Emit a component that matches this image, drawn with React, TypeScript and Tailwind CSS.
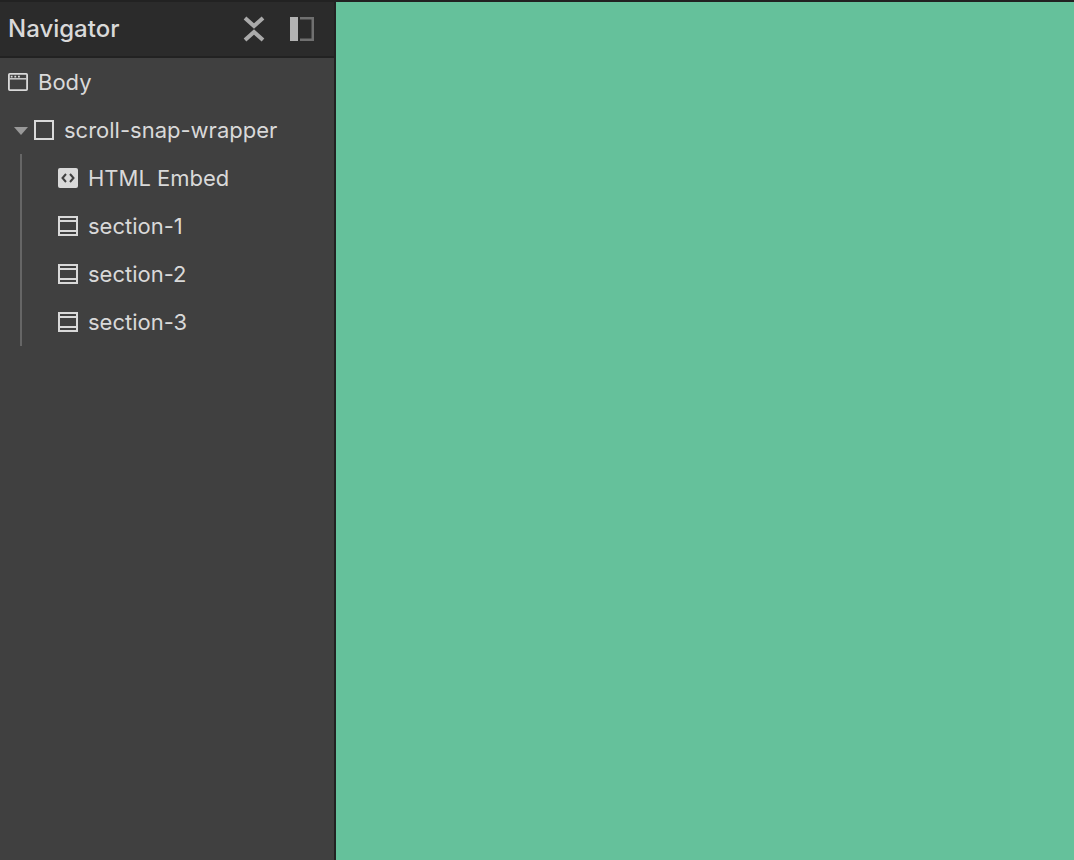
const BodyIcon = () => (
  <svg width="22" height="20" viewBox="0 0 22 20" fill="none">
    <rect x="1" y="1" width="20" height="18" rx="1" stroke="#d9d9d9" strokeWidth="2" />
    <path d="M2 6.5h18" stroke="#d9d9d9" strokeWidth="1.5" />
    <path d="M3 3h2v2H3zM7 3h2v2H7zM11 3h2v2h-2z" fill="#d9d9d9" />
  </svg>
)

const BoxIcon = () => (
  <svg width="20" height="20" viewBox="0 0 20 20" fill="none">
    <rect x="1" y="1" width="18" height="18" stroke="#d9d9d9" strokeWidth="2" />
  </svg>
)

const EmbedIcon = () => (
  <svg width="20" height="20" viewBox="0 0 20 20" fill="none">
    <rect width="20" height="20" rx="2" fill="#d9d9d9" />
    <path d="M8 6l-3.5 4L8 14M12 6l3.5 4-3.5 4" stroke="#404040" strokeWidth="2" />
  </svg>
)

const SectionIcon = () => (
  <svg width="20" height="20" viewBox="0 0 20 20" fill="none">
    <rect x="1" y="1" width="18" height="18" stroke="#d9d9d9" strokeWidth="2" />
    <path d="M1 5h18M1 15h18" stroke="#d9d9d9" strokeWidth="2" />
  </svg>
)

const Row = ({ indent, icon, label, caret }: { indent: string; icon: React.ReactNode; label: string; caret?: boolean }) => (
  <div className={`relative flex h-12 items-center ${indent}`}>
    {caret && (
      <span className="absolute left-[14px] top-[21px] h-0 w-0 border-x-[7px] border-t-[8px] border-x-transparent border-t-[#999999]" />
    )}
    <span className="flex w-5 shrink-0 justify-center">{icon}</span>
    <span className="ml-[10px] text-[22px] leading-none text-[#d9d9d9]">{label}</span>
  </div>
)

export default function App() {
  return (
    <div className="flex h-[860px] w-[1074px] overflow-hidden border-t-2 border-[#222222] bg-[#65c19b] font-['Inter',sans-serif]">
      <aside className="flex w-[336px] shrink-0 flex-col border-r-2 border-[#222222] bg-[#404040]">
        <header className="flex h-[56px] shrink-0 items-center justify-between border-b-2 border-[#222222] bg-[#2b2b2b] pl-2 pr-5">
          <h1 className="text-[24px] font-medium text-[#d9d9d9]">Navigator</h1>
          <div className="flex items-center gap-[24px]">
            <svg width="24" height="26" viewBox="0 0 24 26" fill="none">
              <path d="M3 2l9 8 9-8M3 24l9-8 9 8" stroke="#aaaaaa" strokeWidth="4" />
            </svg>
            <svg width="24" height="24" viewBox="0 0 24 24" fill="none">
              <rect width="8" height="24" fill="#b3b3b3" />
              <path d="M10 1h13v22H10" stroke="#707070" strokeWidth="3" />
            </svg>
          </div>
        </header>
        <div className="relative">
          <Row indent="pl-2" icon={<BodyIcon />} label="Body" />
          <Row indent="pl-[34px]" icon={<BoxIcon />} label="scroll-snap-wrapper" caret />
          <div className="relative">
            <span className="absolute bottom-0 left-[20px] top-0 w-[2px] bg-[#666666]" />
            <Row indent="pl-[58px]" icon={<EmbedIcon />} label="HTML Embed" />
            <Row indent="pl-[58px]" icon={<SectionIcon />} label="section-1" />
            <Row indent="pl-[58px]" icon={<SectionIcon />} label="section-2" />
            <Row indent="pl-[58px]" icon={<SectionIcon />} label="section-3" />
          </div>
        </div>
      </aside>
      <main className="flex-1" />
    </div>
  )
}
